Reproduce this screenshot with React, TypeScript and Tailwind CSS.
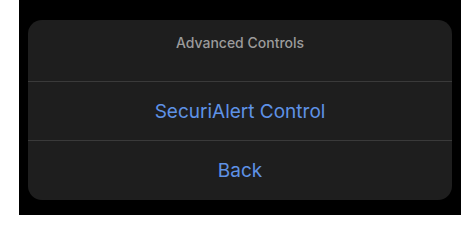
export default function App() {
  return (
    <div className="flex h-[215px] w-[474px] bg-white" style={{ fontFamily: 'Inter, "Liberation Sans", sans-serif' }}>
      <div className="ml-[19px] h-full w-[442px] bg-black px-[9px] pt-[20px]">
        <div className="flex h-[180px] flex-col rounded-[14px] bg-[#1e1e1e]">
          <div className="flex h-[62px] justify-center border-b border-[#3a3a3a] pt-[14px] text-[14px] font-medium leading-[17px] text-[#9b9b9b]">
            Advanced Controls
          </div>
          <button className="flex h-[59px] items-center justify-center border-b border-[#3a3a3a] pt-[3px] text-[19px] text-[#5e92e6]">
            SecuriAlert Control
          </button>
          <button className="flex h-[58px] items-center justify-center pt-[3px] text-[19px] text-[#5e92e6]">
            Back
          </button>
        </div>
      </div>
    </div>
  );
}
